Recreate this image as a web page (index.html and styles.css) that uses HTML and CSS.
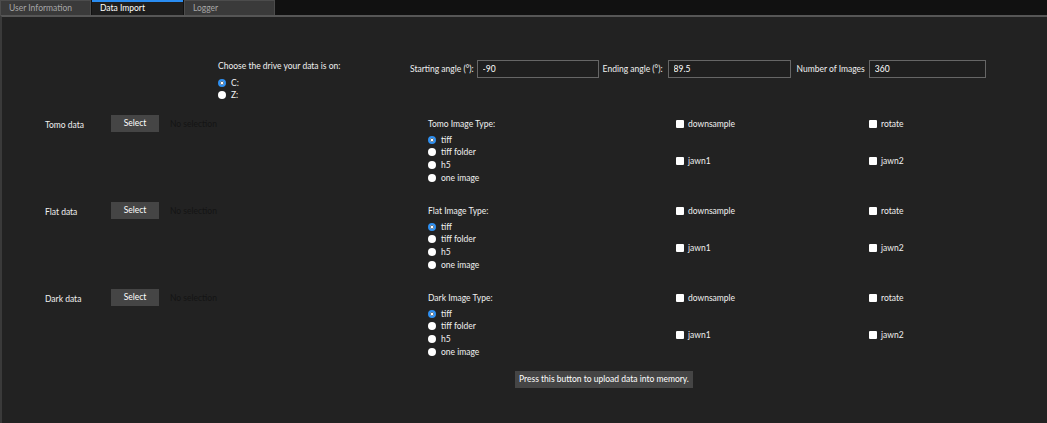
FILE: index.html
```html
<!DOCTYPE html>
<html>
<head>
<meta charset="utf-8">
<title>Data Import</title>
<link rel="stylesheet" href="styles.css">
</head>
<body>
<nav class="tabs">
  <div class="tab">User Information</div>
  <div class="tab active">Data Import</div>
  <div class="tab">Logger</div>
</nav>
<main class="panel">
  <section class="top">
    <div class="drive">
      <div class="caption">Choose the drive your data is on:</div>
      <label class="opt"><input type="radio" name="drive" checked><span>C:</span></label>
      <label class="opt"><input type="radio" name="drive"><span>Z:</span></label>
    </div>
    <div class="angles">
      <label class="field f-start">Starting angle (°):<input class="num w-start" value="-90"></label>
      <label class="field f-end">Ending angle (°):<input class="num w-end" value="89.5"></label>
      <label class="field f-count">Number of Images<input class="num w-count" value="360"></label>
    </div>
  </section>

  <section class="row">
    <div class="name">Tomo data</div>
    <div><button class="btn select">Select</button></div>
    <div class="nosel">No selection</div>
    <div class="types">
      <div class="caption">Tomo Image Type:</div>
      <label class="opt"><input type="radio" name="tomo" checked><span>tiff</span></label>
      <label class="opt"><input type="radio" name="tomo"><span>tiff folder</span></label>
      <label class="opt"><input type="radio" name="tomo"><span>h5</span></label>
      <label class="opt"><input type="radio" name="tomo"><span>one image</span></label>
    </div>
    <div class="checks">
      <label class="chk"><input type="checkbox"><span>downsample</span></label>
      <label class="chk"><input type="checkbox"><span>jawn1</span></label>
    </div>
    <div class="checks">
      <label class="chk"><input type="checkbox"><span>rotate</span></label>
      <label class="chk"><input type="checkbox"><span>jawn2</span></label>
    </div>
  </section>

  <section class="row">
    <div class="name">Flat data</div>
    <div><button class="btn select">Select</button></div>
    <div class="nosel">No selection</div>
    <div class="types">
      <div class="caption">Flat Image Type:</div>
      <label class="opt"><input type="radio" name="flat" checked><span>tiff</span></label>
      <label class="opt"><input type="radio" name="flat"><span>tiff folder</span></label>
      <label class="opt"><input type="radio" name="flat"><span>h5</span></label>
      <label class="opt"><input type="radio" name="flat"><span>one image</span></label>
    </div>
    <div class="checks">
      <label class="chk"><input type="checkbox"><span>downsample</span></label>
      <label class="chk"><input type="checkbox"><span>jawn1</span></label>
    </div>
    <div class="checks">
      <label class="chk"><input type="checkbox"><span>rotate</span></label>
      <label class="chk"><input type="checkbox"><span>jawn2</span></label>
    </div>
  </section>

  <section class="row">
    <div class="name">Dark data</div>
    <div><button class="btn select">Select</button></div>
    <div class="nosel">No selection</div>
    <div class="types">
      <div class="caption">Dark Image Type:</div>
      <label class="opt"><input type="radio" name="dark" checked><span>tiff</span></label>
      <label class="opt"><input type="radio" name="dark"><span>tiff folder</span></label>
      <label class="opt"><input type="radio" name="dark"><span>h5</span></label>
      <label class="opt"><input type="radio" name="dark"><span>one image</span></label>
    </div>
    <div class="checks">
      <label class="chk"><input type="checkbox"><span>downsample</span></label>
      <label class="chk"><input type="checkbox"><span>jawn1</span></label>
    </div>
    <div class="checks">
      <label class="chk"><input type="checkbox"><span>rotate</span></label>
      <label class="chk"><input type="checkbox"><span>jawn2</span></label>
    </div>
  </section>

  <div class="upload">
    <button class="btn">Press this button to upload data into memory.</button>
  </div>
</main>
</body>
</html>
```

FILE: styles.css
```css
html, body {
  margin: 0;
  padding: 0;
}

body {
  width: 1047px;
  height: 423px;
  overflow: hidden;
  background: #111111;
  font-family: "Lato", "Open Sans", sans-serif;
  font-size: 8.5px;
  color: #f0f0f0;
}

.tabs {
  display: flex;
  gap: 1px;
  height: 15px;
}

.tab {
  box-sizing: border-box;
  width: 91px;
  height: 15px;
  padding-left: 8px;
  line-height: 14px;
  background: #3a3a3a;
  border: 1px solid #4c4c4c;
  border-bottom: none;
  color: #a6a6a6;
}

.tab.active {
  background: #1e1e1e;
  border: none;
  border-top: 2px solid #2a8cf0;
  line-height: 13px;
  color: #ffffff;
}

.panel {
  box-sizing: border-box;
  height: 408px;
  background: #222222;
  border-top: 2px solid #565656;
  border-left: 2px solid #3a3a3a;
  padding-top: 43px;
}

.top {
  display: flex;
  align-items: flex-start;
  padding-left: 216px;
}

.drive {
  width: 192px;
  display: flex;
  flex-direction: column;
}

.caption {
  line-height: 12px;
  height: 12px;
}

.drive .caption {
  margin-bottom: 4.5px;
}

.opt {
  display: flex;
  align-items: center;
  height: 12.67px;
}

.opt input {
  appearance: none;
  -webkit-appearance: none;
  margin: 0 5px 0 0;
  width: 8px;
  height: 8px;
  border-radius: 50%;
  background: #ffffff;
  box-sizing: border-box;
}

.opt input:checked {
  border: 2px solid #2e8ff0;
  background: #ffffff;
  box-shadow: inset 0 0 0 0.5px #1e1e1e;
}

.angles {
  display: flex;
  align-items: center;
}

.field {
  display: flex;
  align-items: center;
  gap: 3px;
}

.f-start { margin-right: 4px; }
.f-end { gap: 5px; margin-right: 6px; }
.f-count { gap: 4px; }

.num {
  box-sizing: border-box;
  height: 18px;
  margin: 0;
  padding: 0 5px;
  background: #1f1f1f;
  border: 1px solid #666666;
  color: #ffffff;
  font: inherit;
  outline: none;
}

.w-start { width: 122px; }
.w-end { width: 123px; }
.w-count { width: 117px; }

.row {
  display: grid;
  grid-template-columns: 66px 59px 258px 248px 193px 1fr;
  align-items: start;
  padding-left: 43px;
  height: 87px;
}

.top + .row {
  margin-top: 16.5px;
}

.name {
  line-height: 12px;
  margin-top: 1px;
}

.btn {
  box-sizing: border-box;
  margin: 0;
  border: none;
  background: #454545;
  color: #ffffff;
  font: inherit;
  height: 17px;
  padding: 0 6px;
  cursor: pointer;
}

.select {
  width: 48px;
  margin-top: -4.5px;
}

.nosel {
  color: #141414;
  line-height: 12px;
  margin-top: 0;
}

.types {
  display: flex;
  flex-direction: column;
}

.types .caption {
  margin-bottom: 3px;
}

.checks {
  display: flex;
  flex-direction: column;
  gap: 25px;
}

.chk {
  display: flex;
  align-items: center;
  height: 12px;
}

.chk input {
  appearance: none;
  -webkit-appearance: none;
  margin: 0 4px 0 0;
  width: 8px;
  height: 8px;
  background: #ffffff;
  border-radius: 1px;
}

.upload {
  display: flex;
  justify-content: center;
  padding-left: 159px;
  margin-top: -8.5px;
}

.upload .btn {
  width: 178px;
  padding: 0;
}
```
